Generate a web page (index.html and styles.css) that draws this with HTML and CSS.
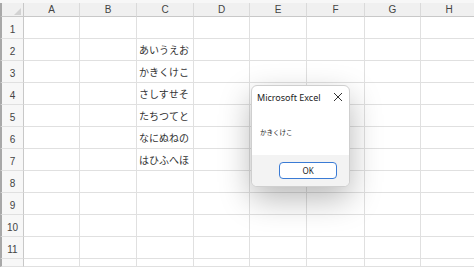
FILE: index.html
```html
<!DOCTYPE html>
<html lang="ja">
<head>
    <meta charset="UTF-8">
    <meta name="viewport" content="width=device-width, initial-scale=1.0">
    <title>Microsoft Excel</title>
    <link rel="stylesheet" href="styles.css">
</head>
<body>
    <div class="hoja">
        <div class="franja"></div>
        <div class="rejilla" id="rejilla"></div>
    </div>

    <!-- Cuadro de mensaje -->
    <div class="dialogo">
        <div class="titulo">
            <span>Microsoft Excel</span>
            <svg class="cerrar" width="10" height="10" viewBox="0 0 10 10">
                <path d="M1 1 L9 9 M9 1 L1 9" stroke="#333" stroke-width="1" fill="none"/>
            </svg>
        </div>
        <div class="cuerpo">かきくけこ</div>
        <div class="pie">
            <button class="boton">OK</button>
        </div>
    </div>

    <script>
        let columnas = ['A', 'B', 'C', 'D', 'E', 'F', 'G', 'H'];
        let textos = { 2: 'あいうえお', 3: 'かきくけこ', 4: 'さしすせそ', 5: 'たちつてと', 6: 'なにぬねの', 7: 'はひふへほ' };
        let html = `<div class='esquina'><span class='triangulo'></span></div>`;
        for (let c of columnas) {
            html += `<div class='cabecera'>${c}</div>`;
        }
        // la fila 12 queda casi fuera de la ventana, sin número visible
        for (let fila = 1; fila <= 12; fila++) {
            html += `<div class='numero'>${fila < 12 ? fila : ''}</div>`;
            for (let c of columnas) {
                let texto = (c === 'C' && textos[fila]) ? textos[fila] : '';
                html += `<div class='celda'>${texto}</div>`;
            }
        }
        document.getElementById("rejilla").innerHTML = html;
    </script>
</body>
</html>
```

FILE: styles.css
```css
body {
    margin: 0;
    width: 474px;
    height: 267px;
    overflow: hidden;
    background: white;
    font-family: "Liberation Sans", Arial, sans-serif;
    position: relative;
}
.hoja {
    display: flex;
    flex-direction: column;
}
.franja {
    height: 3px;
    background: #f7f7f7;
}
.rejilla {
    display: grid;
    grid-template-columns: 24px 56px 57px 57px 56px 57px 58px 56px 57px;
    grid-template-rows: 14px repeat(11, 22px) 8px;
}
.esquina {
    background: #f0f0f0;
    border-left: 2px solid #a8a8a8;
    border-right: 1px solid #c8c8c8;
    border-bottom: 1px solid #c8c8c8;
    box-sizing: border-box;
    position: relative;
}
.triangulo {
    position: absolute;
    right: 2px;
    bottom: 1px;
    width: 0;
    height: 0;
    border-left: 7px solid transparent;
    border-bottom: 7px solid #d2d2d2;
}
.cabecera {
    background: #f0f0f0;
    color: #444;
    font-size: 10px;
    display: flex;
    justify-content: center;
    align-items: center;
    border-right: 1px solid #dadada;
    border-bottom: 1px solid #c8c8c8;
    box-sizing: border-box;
}
.numero {
    background: #f7f7f7;
    color: #444;
    font-size: 10px;
    display: flex;
    justify-content: center;
    align-items: flex-end;
    padding-bottom: 3px;
    border-left: 2px solid #a8a8a8;
    border-right: 1px solid #c8c8c8;
    border-bottom: 1px solid #e0e0e0;
    box-sizing: border-box;
}
.celda {
    font-family: "Noto Sans CJK JP", sans-serif;
    font-size: 10px;
    color: #333;
    white-space: nowrap;
    display: flex;
    align-items: flex-end;
    padding: 0 0 3px 2px;
    border-right: 1px solid #e0e0e0;
    border-bottom: 1px solid #e0e0e0;
    box-sizing: border-box;
}
.dialogo {
    position: absolute;
    left: 251px;
    top: 85px;
    width: 99px;
    height: 102px;
    background: white;
    border: 1px solid #cfcfcf;
    border-radius: 6px;
    box-sizing: border-box;
    box-shadow: 0 12px 32px rgba(0, 0, 0, 0.28);
    display: flex;
    flex-direction: column;
    overflow: hidden;
}
.titulo {
    height: 22px;
    display: flex;
    align-items: center;
    justify-content: space-between;
    padding: 0 6px 0 5px;
    font-family: "Noto Sans", sans-serif;
    font-size: 9px;
    color: #222;
}
.cerrar {
    display: block;
}
.cuerpo {
    flex: 1;
    display: flex;
    align-items: center;
    padding-left: 8px;
    font-family: "Noto Sans CJK JP", sans-serif;
    font-size: 6.5px;
    color: #222;
}
.pie {
    height: 31px;
    background: #f3f3f3;
    display: flex;
    justify-content: flex-end;
    align-items: center;
    padding-right: 12px;
}
.boton {
    width: 58px;
    height: 17px;
    background: white;
    border: 1px solid #3a7bd5;
    border-radius: 4px;
    font-family: "Noto Sans", sans-serif;
    font-size: 8px;
    color: #222;
    padding: 0;
}
```
